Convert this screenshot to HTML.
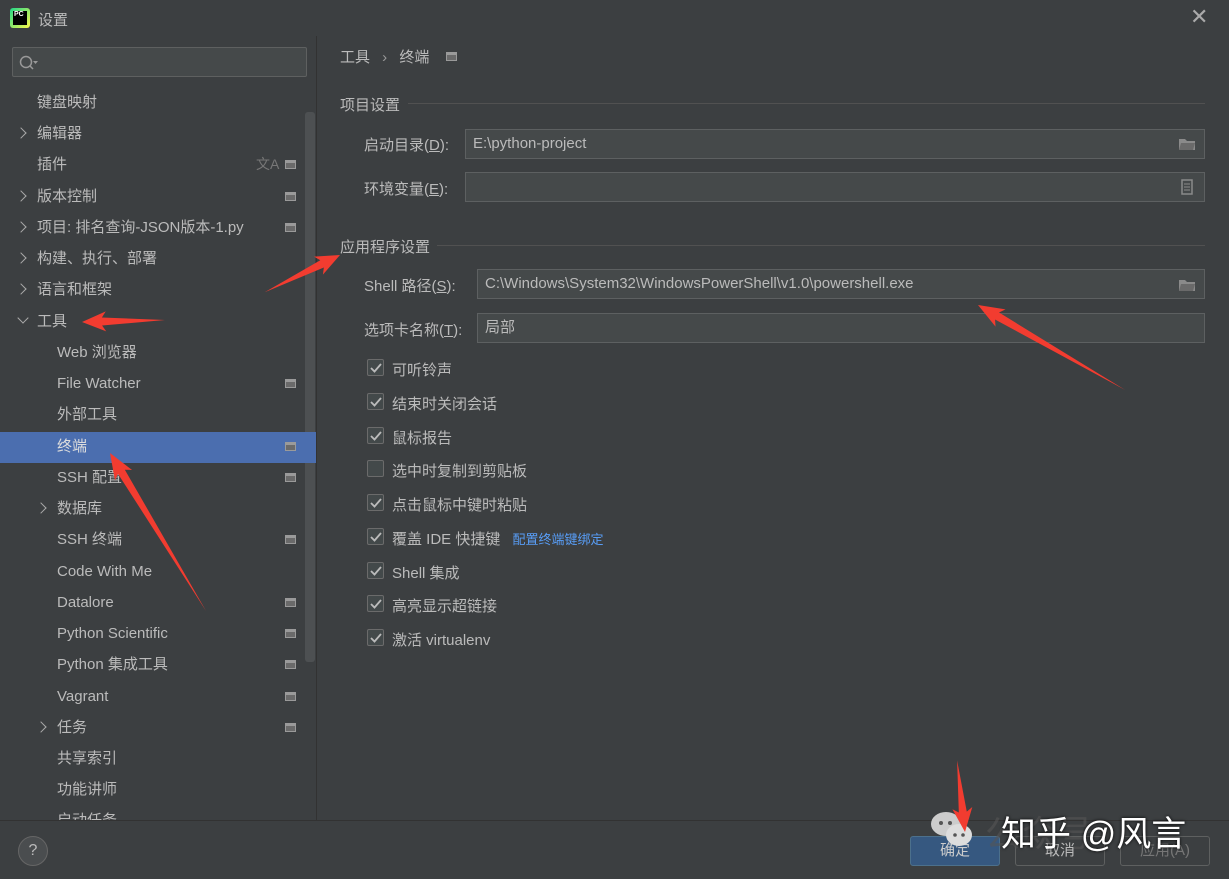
<!DOCTYPE html>
<html><head><meta charset="utf-8"><style>
*{margin:0;padding:0;box-sizing:border-box}
body{width:1229px;height:879px;background:#3c3f41;font-family:"Liberation Sans","Noto Sans CJK SC",sans-serif;color:#bbbbbb;font-size:15px;position:relative;overflow:hidden}
.a{position:absolute;white-space:nowrap}
.row{position:absolute;left:0;width:317px;height:31px;line-height:31px}
.ic{position:absolute;width:11px;height:9px;border:1px solid #9a9a9a;background:#6a6a6a;box-shadow:inset 0 2px 0 #9a9a9a}
.chev{position:absolute;width:8px;height:8px;border-right:1.6px solid #aaa;border-bottom:1.6px solid #aaa}
.field{position:absolute;height:30px;background:#45494a;border:1px solid #5d6061;line-height:28px;padding-left:7px;color:#bbb}
.cb{position:absolute;left:367px;width:17px;height:17px;border:1px solid #6b6b6b;background:#43494a;border-radius:2px}
.cb svg{position:absolute;left:2px;top:2px}
.cl{position:absolute;left:392px}
.btn{position:absolute;top:836px;height:30px;border:1px solid #5e6060;border-radius:3px;text-align:center;line-height:28px;background:#3c3f41}
</style></head><body>
<div class="a" style="left:10px;top:8px;width:20px;height:20px;background:linear-gradient(135deg,#21d789,#fcf84a);border-radius:3px"></div>
<div class="a" style="left:13px;top:11px;width:14px;height:14px;background:#000;color:#fff;font-size:7px;font-weight:bold;line-height:8px;padding-left:1px">PC</div>
<div class="a" style="left:38px;top:9px;font-size:15px">设置</div>
<div class="a" style="left:1190px;top:4px;font-size:22px;color:#aaa">✕</div>
<div class="a" style="left:12px;top:47px;width:295px;height:30px;border:1px solid #5e6060;background:#45494a;border-radius:2px"></div>
<svg class="a" style="left:18px;top:54px" width="22" height="18"><circle cx="8" cy="8" r="5.5" stroke="#999" stroke-width="1.5" fill="none"/><line x1="12" y1="12" x2="15" y2="15" stroke="#999" stroke-width="1.5"/><path d="M15 7h5l-2.5 3z" fill="#999"/></svg>
<div class="a" style="left:305px;top:112px;width:10px;height:550px;background:#4d5052;border-radius:3px"></div>
<div class="a" style="left:0;top:432px;width:317px;height:31px;background:#4b6eaf"></div>
<div class="a" style="left:316px;top:36px;width:1px;height:784px;background:#323232"></div>

<div class="row" style="top:87px"><span class="a" style="left:37px">键盘映射</span></div>
<div class="row" style="top:118px"><i class="chev" style="left:17px;top:11px;transform:rotate(-45deg)"></i><span class="a" style="left:37px">编辑器</span></div>
<div class="row" style="top:149px"><span class="a" style="left:37px">插件</span><span class="a" style="left:256px;color:#777;font-size:14px">文A</span><i class="ic" style="left:285px;top:11px"></i></div>
<div class="row" style="top:181px"><i class="chev" style="left:17px;top:11px;transform:rotate(-45deg)"></i><span class="a" style="left:37px">版本控制</span><i class="ic" style="left:285px;top:11px"></i></div>
<div class="row" style="top:212px"><i class="chev" style="left:17px;top:11px;transform:rotate(-45deg)"></i><span class="a" style="left:37px">项目: 排名查询-JSON版本-1.py</span><i class="ic" style="left:285px;top:11px"></i></div>
<div class="row" style="top:243px"><i class="chev" style="left:17px;top:11px;transform:rotate(-45deg)"></i><span class="a" style="left:37px">构建、执行、部署</span></div>
<div class="row" style="top:274px"><i class="chev" style="left:17px;top:11px;transform:rotate(-45deg)"></i><span class="a" style="left:37px">语言和框架</span></div>
<div class="row" style="top:306px"><i class="chev" style="left:19px;top:8px;transform:rotate(45deg)"></i><span class="a" style="left:37px">工具</span></div>
<div class="row" style="top:337px"><span class="a" style="left:57px">Web 浏览器</span></div>
<div class="row" style="top:368px"><span class="a" style="left:57px">File Watcher</span><i class="ic" style="left:285px;top:11px"></i></div>
<div class="row" style="top:399px"><span class="a" style="left:57px">外部工具</span></div>
<div class="row" style="top:431px"><span class="a" style="left:57px;color:#ddd">终端</span><i class="ic" style="left:285px;top:11px"></i></div>
<div class="row" style="top:462px"><span class="a" style="left:57px">SSH 配置</span><i class="ic" style="left:285px;top:11px"></i></div>
<div class="row" style="top:493px"><i class="chev" style="left:37px;top:11px;transform:rotate(-45deg)"></i><span class="a" style="left:57px">数据库</span></div>
<div class="row" style="top:524px"><span class="a" style="left:57px">SSH 终端</span><i class="ic" style="left:285px;top:11px"></i></div>
<div class="row" style="top:556px"><span class="a" style="left:57px">Code With Me</span></div>
<div class="row" style="top:587px"><span class="a" style="left:57px">Datalore</span><i class="ic" style="left:285px;top:11px"></i></div>
<div class="row" style="top:618px"><span class="a" style="left:57px">Python Scientific</span><i class="ic" style="left:285px;top:11px"></i></div>
<div class="row" style="top:649px"><span class="a" style="left:57px">Python 集成工具</span><i class="ic" style="left:285px;top:11px"></i></div>
<div class="row" style="top:681px"><span class="a" style="left:57px">Vagrant</span><i class="ic" style="left:285px;top:11px"></i></div>
<div class="row" style="top:712px"><i class="chev" style="left:37px;top:11px;transform:rotate(-45deg)"></i><span class="a" style="left:57px">任务</span><i class="ic" style="left:285px;top:11px"></i></div>
<div class="row" style="top:743px"><span class="a" style="left:57px">共享索引</span></div>
<div class="row" style="top:774px"><span class="a" style="left:57px">功能讲师</span></div>
<div class="row" style="top:805px;height:15px;overflow:hidden"><span class="a" style="left:57px">启动任务</span></div>

<div class="a" style="left:340px;top:46px">工具 <span style="color:#999;margin:0 8px">›</span> 终端</div>
<i class="ic" style="left:446px;top:52px"></i>
<div class="a" style="left:340px;top:94px">项目设置</div>
<div class="a" style="left:408px;top:103px;width:797px;height:1px;background:#515151"></div>
<div class="a" style="left:364px;top:134px">启动目录(<u>D</u>):</div>
<div class="field" style="left:465px;top:129px;width:740px">E:\python-project</div>
<svg class="a" style="left:1178px;top:137px" width="18" height="14"><path d="M1 2h6l2 2h8v9H1z" fill="#8a8a8a"/><path d="M3 6h14l-2 7H1z" fill="#6a6a6a"/></svg>
<div class="a" style="left:364px;top:178px">环境变量(<u>E</u>):</div>
<div class="field" style="left:465px;top:172px;width:740px"></div>
<svg class="a" style="left:1181px;top:179px" width="12" height="16"><rect x="1" y="1" width="10" height="14" fill="none" stroke="#8a8a8a" stroke-width="1.5"/><path d="M3 5h6M3 8h6M3 11h6" stroke="#8a8a8a"/></svg>
<div class="a" style="left:340px;top:236px">应用程序设置</div>
<div class="a" style="left:437px;top:245px;width:768px;height:1px;background:#515151"></div>
<div class="a" style="left:364px;top:275px">Shell 路径(<u>S</u>):</div>
<div class="field" style="left:477px;top:269px;width:728px">C:\Windows\System32\WindowsPowerShell\v1.0\powershell.exe</div>
<svg class="a" style="left:1178px;top:278px" width="18" height="14"><path d="M1 2h6l2 2h8v9H1z" fill="#8a8a8a"/><path d="M3 6h14l-2 7H1z" fill="#6a6a6a"/></svg>
<div class="a" style="left:364px;top:319px">选项卡名称(<u>T</u>):</div>
<div class="field" style="left:477px;top:313px;width:728px">局部</div>

<div class="cb" style="top:359px"><svg width="12" height="12"><path d="M1 6l3.5 3.5L11 2" stroke="#bbb" stroke-width="1.8" fill="none"/></svg></div><div class="cl" style="top:359px">可听铃声</div>
<div class="cb" style="top:393px"><svg width="12" height="12"><path d="M1 6l3.5 3.5L11 2" stroke="#bbb" stroke-width="1.8" fill="none"/></svg></div><div class="cl" style="top:393px">结束时关闭会话</div>
<div class="cb" style="top:427px"><svg width="12" height="12"><path d="M1 6l3.5 3.5L11 2" stroke="#bbb" stroke-width="1.8" fill="none"/></svg></div><div class="cl" style="top:427px">鼠标报告</div>
<div class="cb" style="top:460px"></div><div class="cl" style="top:460px">选中时复制到剪贴板</div>
<div class="cb" style="top:494px"><svg width="12" height="12"><path d="M1 6l3.5 3.5L11 2" stroke="#bbb" stroke-width="1.8" fill="none"/></svg></div><div class="cl" style="top:494px">点击鼠标中键时粘贴</div>
<div class="cb" style="top:528px"><svg width="12" height="12"><path d="M1 6l3.5 3.5L11 2" stroke="#bbb" stroke-width="1.8" fill="none"/></svg></div><div class="cl" style="top:528px">覆盖 IDE 快捷键 <span style="color:#589df6;font-size:13px;margin-left:8px">配置终端键绑定</span></div>
<div class="cb" style="top:562px"><svg width="12" height="12"><path d="M1 6l3.5 3.5L11 2" stroke="#bbb" stroke-width="1.8" fill="none"/></svg></div><div class="cl" style="top:562px">Shell 集成</div>
<div class="cb" style="top:595px"><svg width="12" height="12"><path d="M1 6l3.5 3.5L11 2" stroke="#bbb" stroke-width="1.8" fill="none"/></svg></div><div class="cl" style="top:595px">高亮显示超链接</div>
<div class="cb" style="top:629px"><svg width="12" height="12"><path d="M1 6l3.5 3.5L11 2" stroke="#bbb" stroke-width="1.8" fill="none"/></svg></div><div class="cl" style="top:629px">激活 virtualenv</div>

<div class="a" style="left:0;top:820px;width:1229px;height:1px;background:#323232"></div>
<div class="a" style="left:18px;top:836px;width:30px;height:30px;border-radius:50%;border:1px solid #666;background:#4a4d4f;text-align:center;line-height:28px;font-size:16px">?</div>
<div class="btn" style="left:910px;width:90px;background:#365880;border-color:#4c708c;color:#ccc">确定</div>
<div class="btn" style="left:1015px;width:90px">取消</div>
<div class="btn" style="left:1120px;width:90px;color:#777">应用(A)</div>
<div class="a" style="left:985px;top:805px;font-size:36px;color:#555;opacity:.6">公众号</div>
<svg class="a" style="left:928px;top:808px" width="50" height="45"><ellipse cx="18" cy="16" rx="15" ry="12" fill="#ccc"/><ellipse cx="31" cy="27" rx="13" ry="11" fill="#ddd"/><circle cx="13" cy="15" r="2" fill="#555"/><circle cx="22" cy="15" r="2" fill="#555"/><circle cx="27" cy="27" r="1.8" fill="#555"/><circle cx="35" cy="27" r="1.8" fill="#555"/></svg>
<div class="a" style="left:1001px;top:806px;font-size:35px;color:#fff;text-shadow:0 0 3px #000">知乎 @风言</div>

<svg class="a" style="left:0;top:0" width="1229" height="879">
<defs></defs>
<g fill="#f23c30">
<polygon transform="translate(340,255) rotate(-26.3)" points="-84,0 -20,-4 -24,-10 0,0 -24,10 -20,4"/>
<polygon transform="translate(82,322) rotate(178.6)" points="-83,0 -20,-4 -24,-10 0,0 -24,10 -20,4"/>
<polygon transform="translate(110,453) rotate(-121.3)" points="-185,0 -22,-4 -26,-10 0,0 -26,10 -22,4"/>
<polygon transform="translate(978,305) rotate(-150)" points="-170,0 -22,-4 -26,-10 0,0 -26,10 -22,4"/>
<polygon transform="translate(965,832) rotate(83.7)" points="-72,0 -20,-4 -24,-10 0,0 -24,10 -20,4"/>
</g></svg>
</body></html>
